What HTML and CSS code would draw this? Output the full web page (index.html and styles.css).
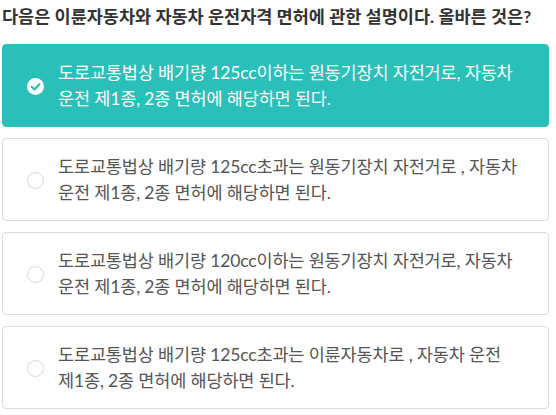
FILE: index.html
```html
<!DOCTYPE html>
<html lang="ko">
<head>
<meta charset="utf-8">
<link rel="stylesheet" href="styles.css">
</head>
<body>
<div class="quiz">
  <h1 class="question">다음은 이륜자동차와 자동차 운전자격 면허에 관한 설명이다. 올바른 것은?</h1>
  <ul class="options">
    <li class="option selected">
      <span class="mark">
        <svg viewBox="0 0 17 17" width="17" height="17"><circle cx="8.5" cy="8.5" r="8.5" fill="#fff"/><path d="M4.6 8.7 L7.4 11.4 L12.4 6.2" fill="none" stroke="#2bbfb9" stroke-width="2.2" stroke-linecap="round" stroke-linejoin="round"/></svg>
      </span>
      <span class="text">도로교통법상 배기량 125cc이하는 원동기장치 자전거로, 자동차 운전 제1종, 2종 면허에 해당하면 된다.</span>
    </li>
    <li class="option">
      <span class="mark radio"></span>
      <span class="text">도로교통법상 배기량 125cc초과는 원동기장치 자전거로 , 자동차 운전 제1종, 2종 면허에 해당하면 된다.</span>
    </li>
    <li class="option">
      <span class="mark radio"></span>
      <span class="text">도로교통법상 배기량 120cc이하는 원동기장치 자전거로, 자동차 운전 제1종, 2종 면허에 해당하면 된다.</span>
    </li>
    <li class="option">
      <span class="mark radio"></span>
      <span class="text">도로교통법상 배기량 125cc초과는 이륜자동차로 , 자동차 운전 제1종, 2종 면허에 해당하면 된다.</span>
    </li>
  </ul>
</div>
</body>
</html>
```

FILE: styles.css
```css
html, body {
  margin: 0;
  padding: 0;
  background: #fff;
}
body {
  font-family: Lato, "Noto Sans CJK KR", sans-serif;
}
.quiz {
  width: 547px;
  padding: 0 0 0 2px;
}
.question {
  margin: 0;
  padding-top: 5px;
  font-size: 17.5px;
  line-height: 24px;
  font-weight: 700;
  color: #333;
  white-space: nowrap;
}
.options {
  list-style: none;
  margin: 15px 0 0;
  padding: 0;
  display: flex;
  flex-direction: column;
  gap: 11px;
}
.option {
  display: flex;
  align-items: center;
  gap: 14px;
  padding: 15px 20px 14px 24px;
  border: 1px solid #dcdcdc;
  border-radius: 4px;
  color: #555;
  font-size: 17.5px;
  line-height: 26px;
  letter-spacing: -0.15px;
  word-break: keep-all;
}
.option.selected {
  background: #2bbfb9;
  border-color: #2bbfb9;
  color: #fff;
}
.mark {
  flex: 0 0 17px;
  width: 17px;
  height: 17px;
  display: flex;
}
.radio {
  box-sizing: border-box;
  border: 1px solid #d8d8d8;
  border-radius: 50%;
  background: #fff;
}
.text {
  flex: 1;
}
```
